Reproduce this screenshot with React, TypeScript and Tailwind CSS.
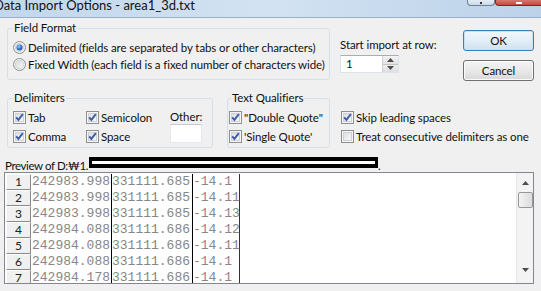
import React from 'react'

const ROWS = [
  ['242983.998', '331111.685', '-14.1'],
  ['242983.998', '331111.685', '-14.11'],
  ['242983.998', '331111.685', '-14.13'],
  ['242984.088', '331111.686', '-14.12'],
  ['242984.088', '331111.686', '-14.11'],
  ['242984.088', '331111.686', '-14.1'],
  ['242984.178', '331111.686', '-14.1'],
]

// ── little win7 controls ──────────────────────────────────────────────────────
function CheckBox({ checked, label }: { checked?: boolean; label: string }) {
  return (
    <div className="flex h-[19px] items-center whitespace-nowrap">
      <svg width="13" height="13" viewBox="0 0 13 13" className="mr-[2px] shrink-0">
        <defs>
          <linearGradient id="cbg" x1="0" y1="0" x2="1" y2="1">
            <stop offset="0" stopColor="#d9dce0" />
            <stop offset="1" stopColor="#fbfbfb" />
          </linearGradient>
        </defs>
        <rect x="0.5" y="0.5" width="12" height="12" fill="#f6f6f6" stroke="#8e8f8f" />
        <rect x="2.5" y="2.5" width="8" height="8" fill="url(#cbg)" stroke="#cdd0d4" />
        {checked && (
          <path d="M3.2 6.4 L5.4 8.9 L9.8 3.2" fill="none" stroke="#3d5ea6" strokeWidth="1.9" />
        )}
      </svg>
      <span>{label}</span>
    </div>
  )
}

function Radio({ checked, label }: { checked?: boolean; label: string }) {
  return (
    <div className="flex h-[17px] items-center whitespace-nowrap">
      <svg width="13" height="13" viewBox="0 0 13 13" className="mr-[2px] shrink-0">
        <defs>
          <linearGradient id="rbg" x1="0" y1="0" x2="1" y2="1">
            <stop offset="0" stopColor="#d4d6d9" />
            <stop offset="1" stopColor="#fafafa" />
          </linearGradient>
          <radialGradient id="rdot" cx="0.4" cy="0.35" r="0.7">
            <stop offset="0" stopColor="#9fd0f7" />
            <stop offset="0.6" stopColor="#2e71c8" />
            <stop offset="1" stopColor="#1b4d96" />
          </radialGradient>
        </defs>
        <circle cx="6.5" cy="6.5" r="6" fill="#f3f3f3" stroke="#8e8f8f" />
        <circle cx="6.5" cy="6.5" r="4.2" fill="url(#rbg)" stroke="#c9cbce" strokeWidth="0.8" />
        {checked && <circle cx="6.5" cy="6.5" r="3" fill="url(#rdot)" />}
      </svg>
      <span>{label}</span>
    </div>
  )
}

function Btn({ label, primary }: { label: string; primary?: boolean }) {
  return (
    <button
      className={
        primary
          ? 'flex h-[21px] w-[71px] items-center justify-center rounded-[3px] border border-[#3c7fb1] bg-gradient-to-b from-[#f1f7fc] via-[#e3eef8] to-[#cfe1f0] shadow-[inset_0_0_0_1px_#c3e2f7]'
          : 'flex h-[21px] w-[71px] items-center justify-center rounded-[3px] border border-[#707070] bg-gradient-to-b from-[#f4f4f4] via-[#e9e9e9] to-[#d8d8d8] shadow-[inset_0_0_0_1px_#fbfbfb]'
      }
    >
      {label}
    </button>
  )
}

function Arrow({ up }: { up?: boolean }) {
  return (
    <svg width="7" height="4" viewBox="0 0 7 4">
      <path d={up ? 'M0 4 L3.5 0 L7 4 Z' : 'M0 0 L7 0 L3.5 4 Z'} fill="#4d4d4d" />
    </svg>
  )
}

// ── title bar ─────────────────────────────────────────────────────────────────
function TitleBar() {
  return (
    <div className="flex h-[18px] items-start border-b border-[#9aafc6] bg-gradient-to-r from-[#c2d7ec] via-[#d2e2f2] to-[#bcd2e9]">
      <span className="-ml-[6px] -mt-[2px] whitespace-nowrap text-[13px] leading-[15px] tracking-normal text-[#111]">
        Data Import Options - area1_3d.txt
      </span>
      <div className="ml-auto flex">
        <div className="flex h-[6px] w-[28px] items-end justify-center rounded-b-[4px] border border-t-0 border-[#6f7f95] bg-gradient-to-b from-[#e4edf6] to-[#c9d9ea]">
          <span className="mb-[1px] h-[2px] w-[2px] bg-[#333]" />
        </div>
        <div className="flex h-[6px] w-[46px] items-end justify-center rounded-bl-[4px] border border-t-0 border-r-0 border-[#6b2f2b] bg-gradient-to-b from-[#d9776f] to-[#c7463c]">
          <span className="mb-[1px] h-[2px] w-[6px] bg-white" />
        </div>
      </div>
    </div>
  )
}

// ── preview grid ──────────────────────────────────────────────────────────────
function Preview() {
  return (
    <div className="ml-[4px] flex h-[112px] w-[530px] border border-[#828790] bg-white tracking-normal">
      <div className="flex-1 overflow-hidden pt-[1px]">
        {ROWS.map((r, i) => (
          <div key={i} className="flex h-[16px]">
            <div className="ml-[1px] flex w-[25px] items-center justify-center border border-t-white border-l-white border-r-[#8a8a8a] border-b-[#8a8a8a] bg-[#f0f0f0] text-[12px] leading-[14px] text-[#222]">
              {i + 1}
            </div>
            <div className="w-[81px] border-r border-black pl-[1px] font-['Liberation_Mono',monospace] text-[13px] leading-[16px] text-[#878787]">
              {r[0]}
            </div>
            <div className="w-[81px] border-r border-black font-['Liberation_Mono',monospace] text-[13px] leading-[16px] text-[#878787]">
              {r[1]}
            </div>
            <div className="w-[47px] border-r border-[#333] font-['Liberation_Mono',monospace] text-[13px] leading-[16px] text-[#878787]">
              {r[2]}
            </div>
          </div>
        ))}
      </div>

      {/* vertical scrollbar */}
      <div className="flex w-[17px] flex-col items-center border-l border-[#e6e6e6] bg-[#f3f3f3]">
        <div className="flex h-[19px] items-center justify-center">
          <Arrow up />
        </div>
        <div className="h-[16px] w-[15px] rounded-[2px] border border-[#979797] bg-gradient-to-r from-[#f4f4f4] to-[#dcdcdc]" />
        <div className="flex-1" />
        <div className="mb-[5px] flex h-[17px] items-center justify-center">
          <Arrow />
        </div>
      </div>
    </div>
  )
}

export default function App() {
  return (
    <div className="h-[291px] w-[541px] overflow-hidden bg-[#f0f0f0] font-['Lato','Noto_Sans_CJK_KR',sans-serif] text-[11.5px] tracking-[-0.1px] text-[#111]">
      <TitleBar />

      {/* top row — field format, start row, buttons */}
      <div className="flex items-start">
        <fieldset className="ml-[7px] mt-[3px] w-[323px] min-w-0 shrink-0 rounded-[3px] border border-[#d5dfe5] pb-[6px] pl-[5px]">
          <legend className="px-[1px] leading-[14px]">Field Format</legend>
          <div className="pt-[4px]">
            <Radio checked label="Delimited (fields are separated by tabs or other characters)" />
            <Radio label="Fixed Width (each field is a fixed number of characters wide)" />
          </div>
        </fieldset>

        <div className="ml-[10px] mt-[20px]">
          <div className="leading-[14px] whitespace-nowrap">Start import at row:</div>
          <div className="mt-[3px] flex h-[18px] w-[59px] border border-[#dde3ea] border-t-[#abadb3] bg-white">
            <span className="flex-1 pl-[5px] leading-[16px]">1</span>
            <div className="flex w-[16px] flex-col border-l border-[#d0d0d0]">
              <div className="flex flex-1 items-center justify-center border-b border-[#c4c4c4] bg-gradient-to-b from-[#f4f4f4] to-[#e2e2e2]">
                <Arrow up />
              </div>
              <div className="flex flex-1 items-center justify-center bg-gradient-to-b from-[#f0f0f0] to-[#dedede]">
                <Arrow />
              </div>
            </div>
          </div>
        </div>

        <div className="ml-auto mr-[7px] mt-[12px] flex flex-col gap-[9px]">
          <Btn label="OK" primary />
          <Btn label="Cancel" />
        </div>
      </div>

      {/* second row — delimiters, qualifiers, options */}
      <div className="mt-[10px] flex items-start">
        <fieldset className="ml-[7px] w-[206px] min-w-0 shrink-0 rounded-[3px] border border-[#d5dfe5] pb-[1px] pl-[5px]">
          <legend className="px-[1px] leading-[14px]">Delimiters</legend>
          <div className="flex pt-[3px]">
            <div className="w-[73px]">
              <CheckBox checked label="Tab" />
              <CheckBox checked label="Comma" />
            </div>
            <div className="w-[84px]">
              <CheckBox checked label="Semicolon" />
              <CheckBox checked label="Space" />
            </div>
            <div className="pt-[2px]">
              <div className="leading-[14px]">Other:</div>
              <div className="h-[19px] w-[32px] border border-[#e3e9ef] border-t-[#c5c9cf] bg-white" />
            </div>
          </div>
        </fieldset>

        <fieldset className="ml-[14px] w-[103px] min-w-0 shrink-0 rounded-[3px] border border-[#d5dfe5] pb-[1px] pl-[1px]">
          <legend className="ml-[2px] px-[1px] leading-[14px]">Text Qualifiers</legend>
          <div className="pt-[3px]">
            <CheckBox checked label={'"Double Quote"'} />
            <CheckBox checked label="'Single Quote'" />
          </div>
        </fieldset>

        <div className="ml-[11px] mt-[17px]">
          <CheckBox checked label="Skip leading spaces" />
          <CheckBox label="Treat consecutive delimiters as one" />
        </div>
      </div>

      {/* preview label with the blacked-out path */}
      <div className="mt-[11px] ml-[5px] flex h-[13px] items-center whitespace-nowrap leading-[13px]">
        <span className="tracking-[-0.4px]">Preview of D:₩1.</span>
        <span className="ml-[1px] -mt-[6px] h-[11px] w-[289px] border-x-[3px] border-y-[4px] border-black bg-white" />
        <span>.</span>
      </div>

      <Preview />
    </div>
  )
}
